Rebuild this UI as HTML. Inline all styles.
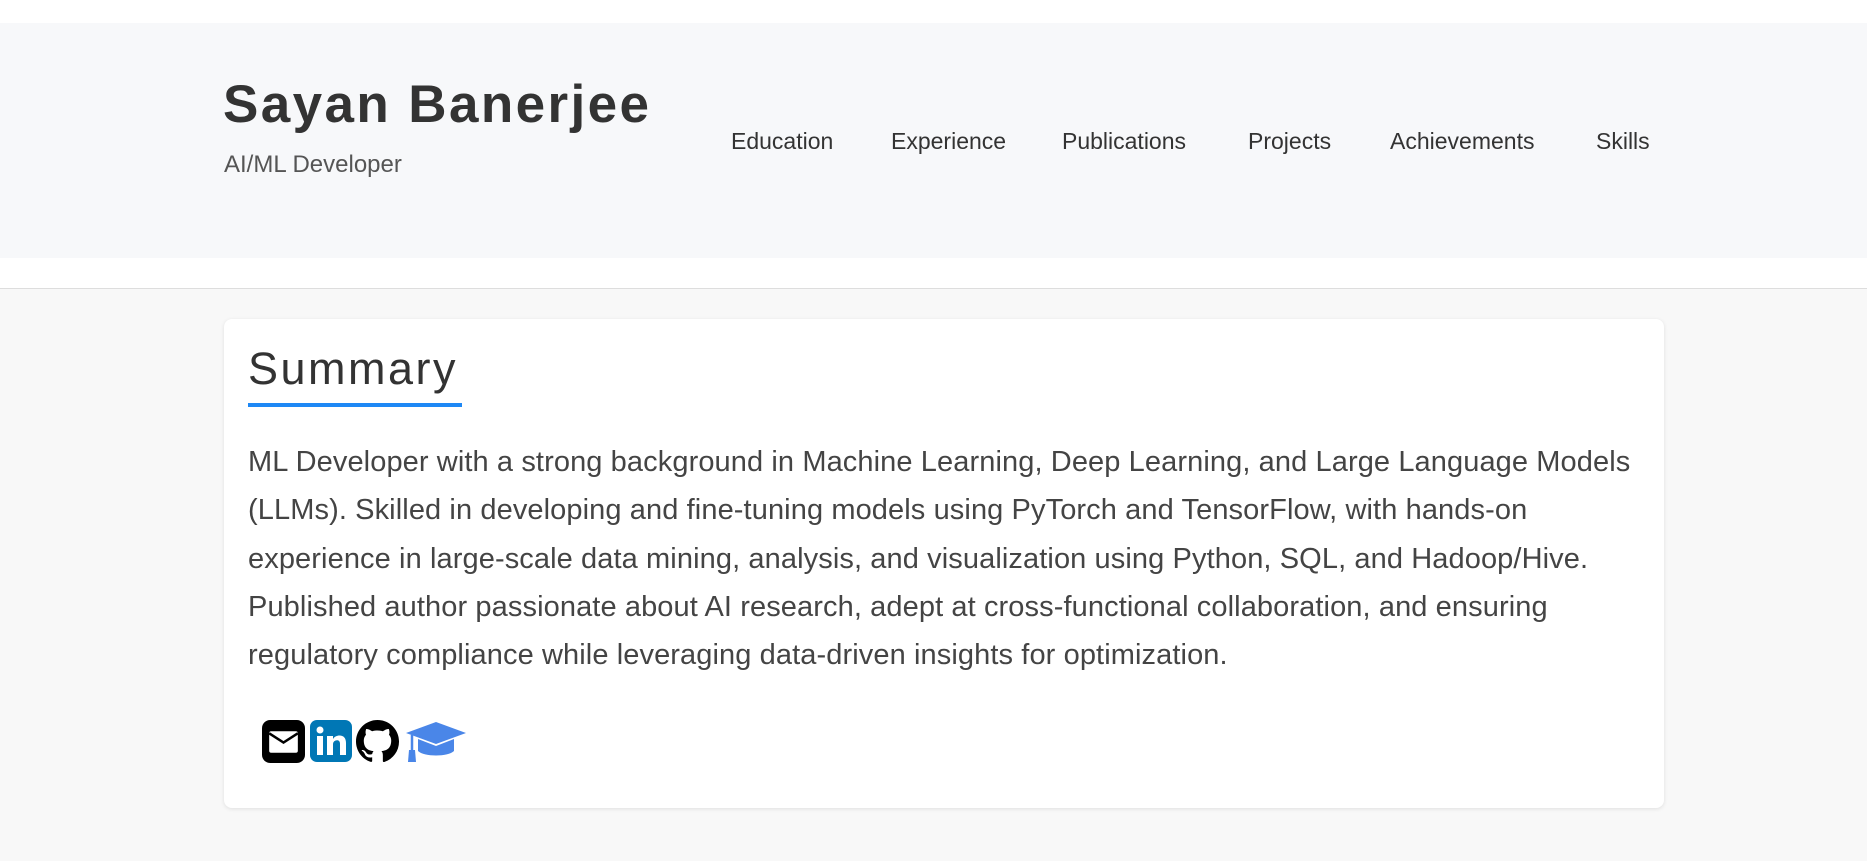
<!DOCTYPE html>
<html><head><meta charset="utf-8"><style>
*{margin:0;padding:0;box-sizing:border-box}
body{width:1867px;height:861px;background:#f8f8f8;font-family:"Liberation Sans",sans-serif;position:relative;overflow:hidden}
.top{position:absolute;left:0;top:0;width:1867px;height:289px;background:#fff;border-bottom:1px solid #ddd}
.hdr{position:absolute;left:0;top:23px;width:1867px;height:235px;background:#f7f8fa}
.name{position:absolute;left:223px;top:74px;font-size:53px;font-weight:bold;color:#333;letter-spacing:2.4px}
.sub{position:absolute;left:224px;top:151px;font-size:24px;color:#555}
.nav a{position:absolute;top:128px;font-size:23px;color:#333;text-decoration:none}
.card{position:absolute;left:224px;top:319px;width:1440px;height:489px;background:#fff;border-radius:8px;box-shadow:0 1px 4px rgba(0,0,0,.1)}
.h{position:absolute;left:24px;top:24px;font-size:45px;color:#333;font-weight:normal;letter-spacing:2.5px}
.ul{position:absolute;left:24px;top:84px;width:214px;height:4px;background:#1e88f5}
.p{position:absolute;left:24px;top:119px;white-space:nowrap;font-size:29px;line-height:48.3px;color:#444;letter-spacing:0.1px}
.ic{position:absolute;top:401px}
</style></head><body>
<div class="top"></div>
<div class="hdr"></div>
<div class="name">Sayan Banerjee</div>
<div class="sub">AI/ML Developer</div>
<div class="nav">
<a style="left:731px">Education</a><a style="left:891px">Experience</a><a style="left:1062px">Publications</a><a style="left:1248px">Projects</a><a style="left:1390px">Achievements</a><a style="left:1596px">Skills</a>
</div>
<div class="card">
<div class="h">Summary</div>
<div class="ul"></div>
<div class="p">ML Developer with a strong background in Machine Learning, Deep Learning, and Large Language Models<br>(LLMs). Skilled in developing and fine-tuning models using PyTorch and TensorFlow, with hands-on<br>experience in large-scale data mining, analysis, and visualization using Python, SQL, and Hadoop/Hive.<br>Published author passionate about AI research, adept at cross-functional collaboration, and ensuring<br>regulatory compliance while leveraging data-driven insights for optimization.</div>
<svg class="ic" style="left:38px" width="43" height="43" viewBox="0 0 42 42"><rect width="42" height="42" rx="8" fill="#000"/><rect x="7" y="11" width="28" height="21" rx="2" fill="#fff"/><path d="M7 13 L21 22 L35 13" stroke="#000" stroke-width="2.5" fill="none"/></svg>
<svg class="ic" style="left:86px" width="42" height="42" viewBox="0 0 42 42"><rect width="42" height="42" rx="7" fill="#0077b5"/><circle cx="10" cy="10" r="3.5" fill="#fff"/><rect x="7" y="16" width="6" height="19" fill="#fff"/><path d="M17 16h6v3c1.5-2.5 4-3.5 6.5-3.5 4 0 6.5 2.5 6.5 7.5V35h-6V24c0-2.5-1-3.8-3-3.8s-4 1.4-4 4V35h-6z" fill="#fff"/></svg>
<svg class="ic" style="left:132px" width="43" height="43" viewBox="0 0 16 16"><path fill="#000" d="M8 0C3.58 0 0 3.58 0 8c0 3.54 2.29 6.53 5.47 7.59.4.07.55-.17.55-.38v-1.33c-2.23.48-2.7-1.07-2.7-1.07-.36-.92-.89-1.17-.89-1.17-.73-.5.05-.49.05-.49.8.06 1.23.83 1.23.83.71 1.23 1.87.87 2.33.66.07-.52.28-.87.51-1.07-1.78-.2-3.65-.89-3.65-3.95 0-.87.31-1.59.82-2.15-.08-.2-.36-1.02.08-2.12 0 0 .67-.21 2.2.82.64-.18 1.32-.27 2-.27s1.36.09 2 .27c1.53-1.04 2.2-.82 2.2-.82.44 1.1.16 1.92.08 2.12.51.56.82 1.27.82 2.15 0 3.07-1.87 3.75-3.65 3.95.29.25.54.73.54 1.48v2.2c0 .21.15.46.55.38A8.01 8.01 0 0016 8c0-4.42-3.58-8-8-8z"/></svg>
<svg class="ic" style="left:180px" width="64" height="44" viewBox="0 0 64 44"><path d="M32 2 L62 13 L32 24 L2 13 Z" fill="#4a86e8"/><path d="M14 19 V31 C20 37 44 37 50 31 V19 L32 26 Z" fill="#4a86e8"/><path d="M8 15 V32" stroke="#4a86e8" stroke-width="2.5"/><path d="M5 30 h6 l1 12 h-8z" fill="#4a86e8"/></svg>
</div>
</body></html>
